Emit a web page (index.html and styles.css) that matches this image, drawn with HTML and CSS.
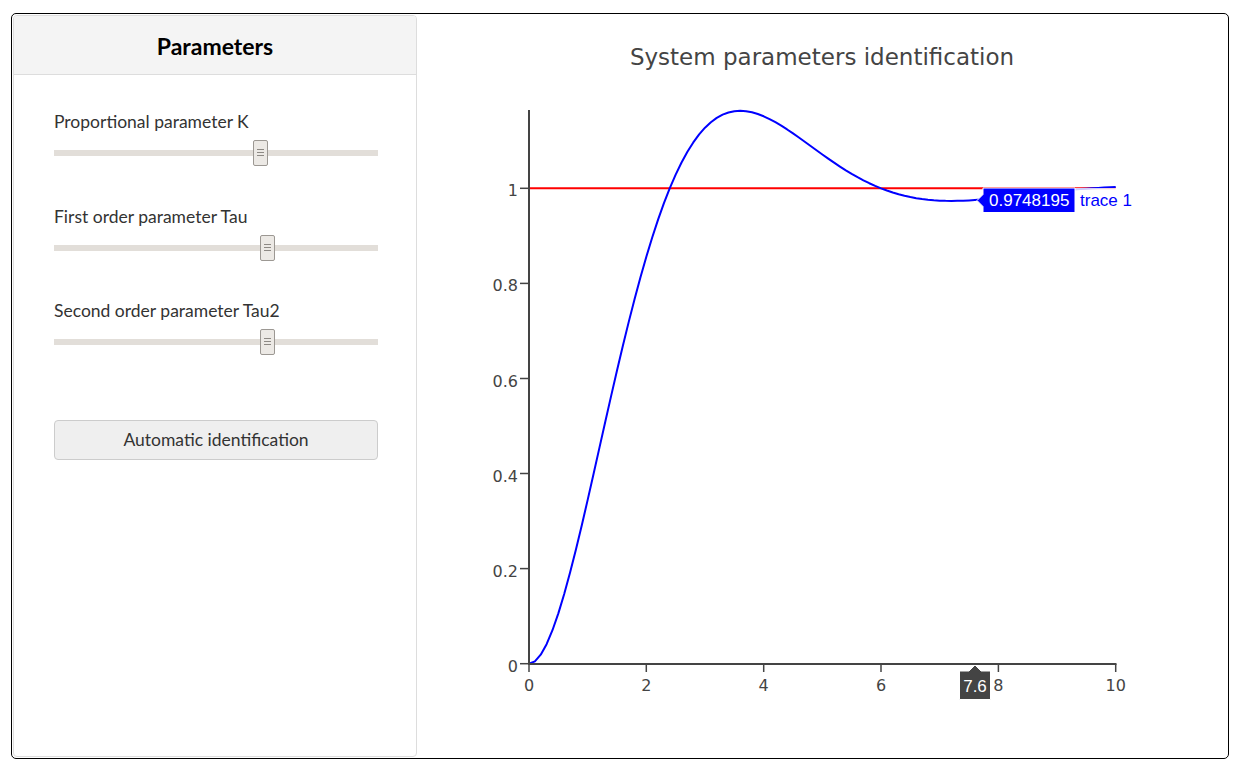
FILE: index.html
```html
<!DOCTYPE html>
<html>
<head>
<meta charset="utf-8">
<title>System parameters identification</title>
<link rel="stylesheet" href="styles.css">
</head>
<body>
<div class="app">
  <aside class="panel">
    <div class="panel-header">Parameters</div>
    <div class="panel-body">
      <div class="field">
        <label class="field-label">Proportional parameter K</label>
        <div class="slider"><div class="track"></div><div class="handle" style="left: 61.4%"></div></div>
      </div>
      <div class="field">
        <label class="field-label">First order parameter Tau</label>
        <div class="slider"><div class="track"></div><div class="handle" style="left: 63.6%"></div></div>
      </div>
      <div class="field">
        <label class="field-label">Second order parameter Tau2</label>
        <div class="slider"><div class="track"></div><div class="handle" style="left: 63.6%"></div></div>
      </div>
      <button class="btn">Automatic identification</button>
    </div>
  </aside>
  <main class="chart">
    <svg class="plot" width="810" height="742" viewBox="417 15 810 742">
      <text class="title" x="822" y="65" text-anchor="middle">System parameters identification</text>
      <g class="ticks">
        <line x1="520" y1="663.7" x2="529" y2="663.7"/>
        <line x1="520" y1="568.6" x2="529" y2="568.6"/>
        <line x1="520" y1="473.5" x2="529" y2="473.5"/>
        <line x1="520" y1="378.5" x2="529" y2="378.5"/>
        <line x1="520" y1="283.4" x2="529" y2="283.4"/>
        <line x1="520" y1="188.3" x2="529" y2="188.3"/>
        <line x1="529" y1="664" x2="529" y2="672"/>
        <line x1="646.3" y1="664" x2="646.3" y2="672"/>
        <line x1="763.7" y1="664" x2="763.7" y2="672"/>
        <line x1="881" y1="664" x2="881" y2="672"/>
        <line x1="998.4" y1="664" x2="998.4" y2="672"/>
        <line x1="1115.7" y1="664" x2="1115.7" y2="672"/>
      </g>
      <g class="tick-labels ylab" text-anchor="end">
        <text x="518" y="671.7">0</text>
        <text x="518" y="576.6">0.2</text>
        <text x="518" y="481.5">0.4</text>
        <text x="518" y="386.5">0.6</text>
        <text x="518" y="291.4">0.8</text>
        <text x="518" y="196.3">1</text>
      </g>
      <g class="tick-labels xlab" text-anchor="middle">
        <text x="529" y="691">0</text>
        <text x="646.3" y="691">2</text>
        <text x="763.7" y="691">4</text>
        <text x="881" y="691">6</text>
        <text x="998.4" y="691">8</text>
        <text x="1115.7" y="691">10</text>
      </g>
      <line class="ref" x1="529" y1="188.3" x2="1115.7" y2="188.3"/>
      <path id="curve" class="curve" d="M529,663.7"/>
      <line class="axis" x1="529" y1="110" x2="529" y2="665"/>
      <line class="axis" x1="528" y1="664" x2="1116.5" y2="664"/>
      <g class="hover">
        <rect class="name-bg" x="1075" y="188" width="62" height="24"/>
        <path class="hover-box" d="M977,200.5 L983,194.5 V188 H1075 V212.5 H983 V206.5 Z"/>
        <text class="hover-val" x="989" y="205.5">0.9748195</text>
        <text class="hover-name" x="1080" y="205.5">trace 1</text>
        <path class="hover-x" d="M975,665 L981,671 H990.5 V699.5 H959.5 V671 H969 Z"/>
        <text class="hover-xval" x="975" y="691.5" text-anchor="middle">7.6</text>
      </g>
    </svg>
  </main>
</div>
<script src="script.js"></script>
</body>
</html>
```

FILE: styles.css
```css
html, body {
  margin: 0;
  padding: 0;
  background: #ffffff;
}

.app {
  box-sizing: border-box;
  margin: 13px 0 0 11px;
  width: 1218px;
  height: 746px;
  border: 1px solid #000000;
  border-radius: 5px;
  padding: 1px;
  display: flex;
}

.panel {
  box-sizing: border-box;
  width: 404px;
  flex: none;
  border: 1px solid #dddddd;
  border-radius: 4px;
  display: flex;
  flex-direction: column;
  font-family: Lato, "Open Sans", sans-serif;
  color: #333333;
}

.panel-header {
  height: 59px;
  flex: none;
  background: #f4f4f4;
  border-bottom: 1px solid #dddddd;
  border-radius: 3px 3px 0 0;
  display: flex;
  align-items: center;
  justify-content: center;
  font-weight: 700;
  font-size: 23px;
  color: #000000;
  padding-top: 2px;
  box-sizing: border-box;
}

.panel-body {
  padding: 35px 38px 0 40px;
  display: flex;
  flex-direction: column;
}

.field {
  display: flex;
  flex-direction: column;
  margin-bottom: 38.5px;
}

.field-label {
  font-size: 17.5px;
  line-height: 22px;
  height: 22px;
  margin-top: 1px;
}

.slider {
  position: relative;
  height: 26px;
  margin-top: 7px;
}

.track {
  position: absolute;
  left: 0;
  right: 0;
  top: 10px;
  height: 6px;
  background: #e2ded9;
}

.handle {
  position: absolute;
  top: 0;
  box-sizing: border-box;
  width: 15px;
  height: 26px;
  background: #ece9e5;
  border: 1px solid #9c9893;
  border-radius: 2px;
}

.handle::after {
  content: "";
  position: absolute;
  left: 3px;
  right: 3px;
  top: 8px;
  height: 5px;
  border-top: 1px solid #8d8984;
  border-bottom: 1px solid #8d8984;
  background: linear-gradient(#8d8984, #8d8984) center / 100% 1px no-repeat;
}

.btn {
  margin-top: 26px;
  height: 40px;
  width: 100%;
  box-sizing: border-box;
  background: #efefef;
  border: 1px solid #cccccc;
  border-radius: 4px;
  font-family: Lato, "Open Sans", sans-serif;
  font-size: 17.5px;
  color: #333333;
  padding: 0;
}

.chart {
  flex: 1;
  display: flex;
}

.plot {
  display: block;
}

.title {
  font-family: "DejaVu Sans", Verdana, sans-serif;
  font-size: 23px;
  fill: #444444;
}

.ticks line {
  stroke: #444444;
  stroke-width: 1.5;
}

.tick-labels {
  font-family: "DejaVu Sans", Verdana, sans-serif;
  font-size: 16px;
  fill: #444444;
}

.axis {
  stroke: #444444;
  stroke-width: 2;
}

.ref {
  stroke: #ff0000;
  stroke-width: 2;
}

.curve {
  fill: none;
  stroke: #0000ff;
  stroke-width: 2;
  stroke-linejoin: round;
}

.name-bg {
  fill: rgba(255, 255, 255, 0.8);
}

.hover-box {
  fill: #0000ff;
  stroke: #ffffff;
  stroke-width: 1;
}

.hover-val {
  font-family: "Liberation Sans", Arial, sans-serif;
  font-size: 17px;
  fill: #ffffff;
}

.hover-name {
  font-family: "Liberation Sans", Arial, sans-serif;
  font-size: 17px;
  fill: #0000ff;
}

.hover-x {
  fill: #444444;
  stroke: #ffffff;
  stroke-width: 1;
}

.hover-xval {
  font-family: "Liberation Sans", Arial, sans-serif;
  font-size: 17px;
  fill: #ffffff;
}
```

FILE: script.js
```js
(function () {
  var z = 0.5, wn = 1.008;
  var s = Math.sqrt(1 - z * z);
  var wd = wn * s;
  var phi = Math.acos(z);
  function resp(t) {
    return 1 - Math.exp(-z * wn * t) / s * Math.sin(wd * t + phi);
  }
  var d = "";
  for (var i = 0; i <= 100; i++) {
    var t = i * 0.1;
    var px = 529 + t * 58.67;
    var py = 663.7 - resp(t) * 475.4;
    d += (i ? "L" : "M") + px.toFixed(2) + "," + py.toFixed(2);
  }
  document.getElementById("curve").setAttribute("d", d);
})();
```
